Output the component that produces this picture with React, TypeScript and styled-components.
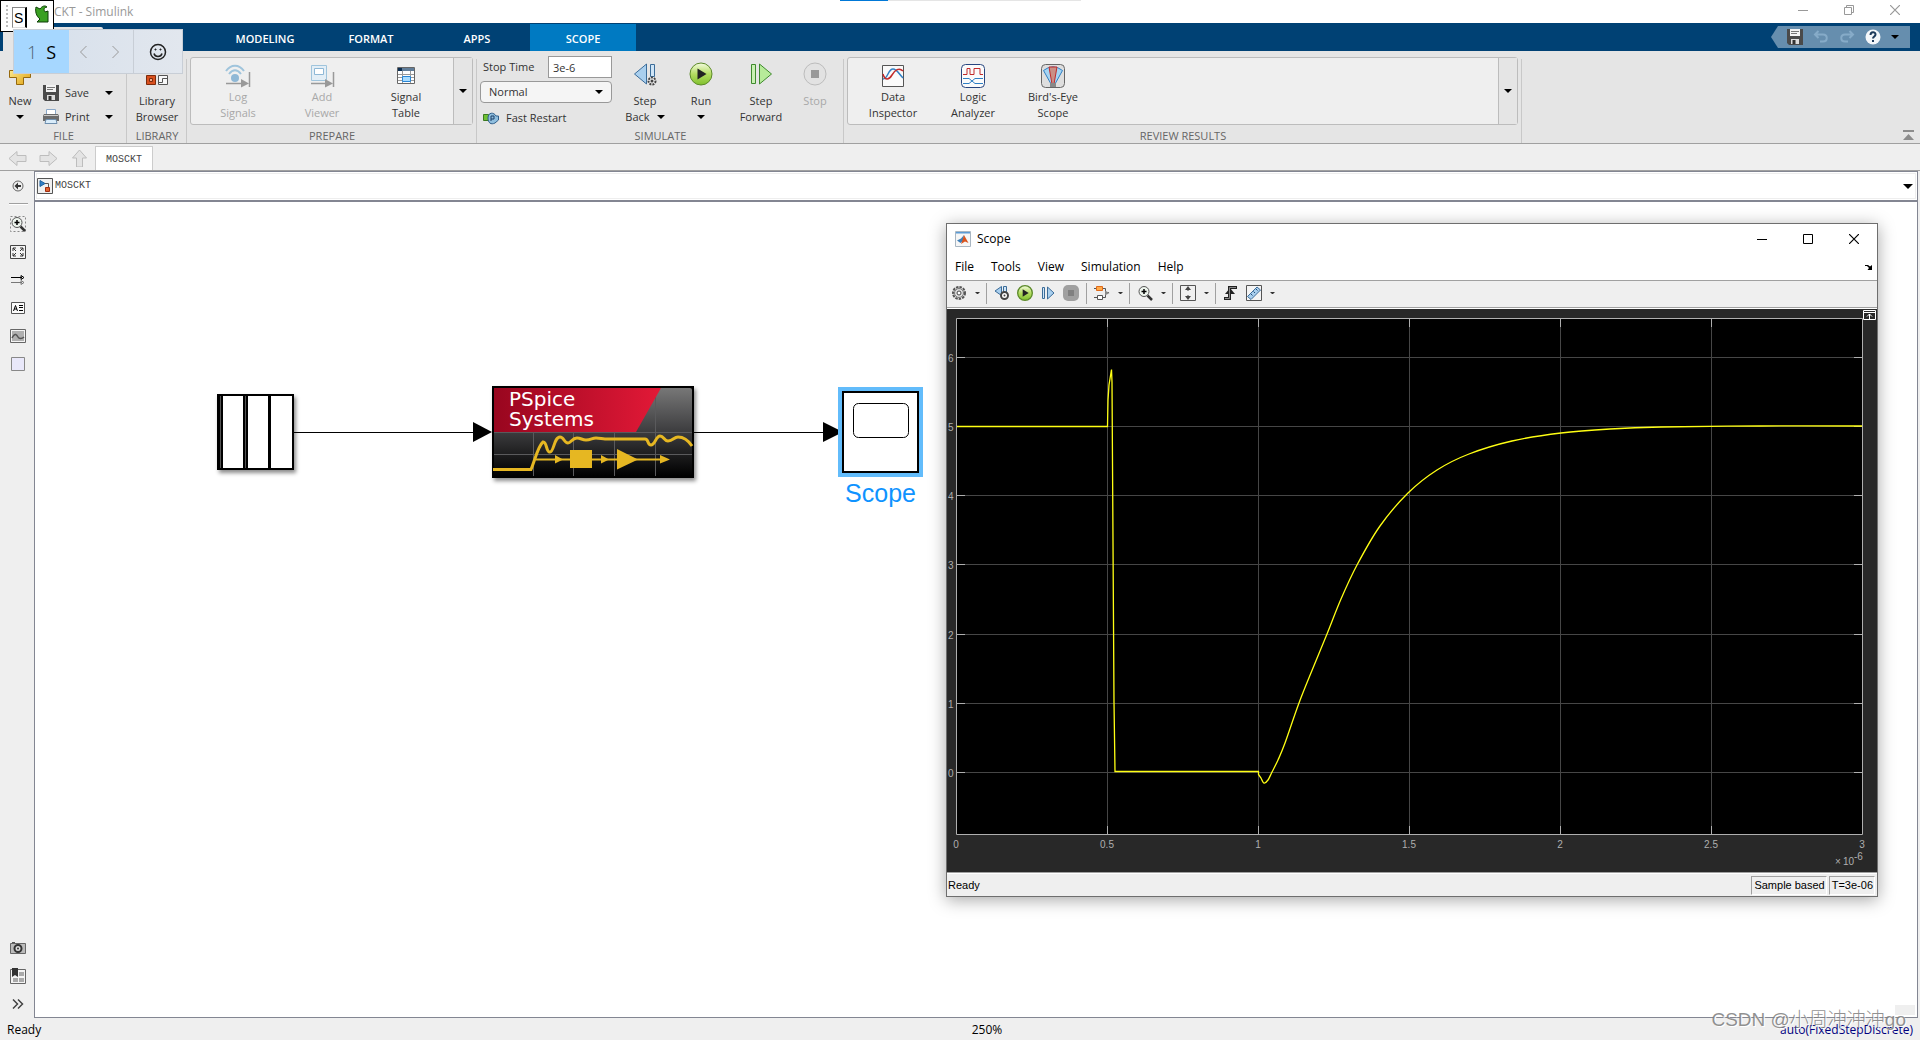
import React from "react";
import styled, { createGlobalStyle, css } from "styled-components";

const Global = createGlobalStyle`
  * { box-sizing: border-box; }
  html, body, #root { height: 100%; }
  body {
    margin: 0;
    overflow: hidden;
    background: #efefef;
    color: #000;
    font: 12px/16px "Open Sans", "Noto Sans", sans-serif;
  }
  button, input, select { font: inherit; color: inherit; }
  svg { display: block; flex: none; }
`;

const buttonReset = css`
  margin: 0;
  padding: 0;
  border: 0;
  background: none;
`;

/* ---------- window frame ---------- */

const Shell = styled.div`
  position: relative;
  display: flex;
  flex-direction: column;
  height: 100vh;
`;

const TitleBar = styled.header`
  display: flex;
  flex: none;
  justify-content: space-between;
  height: 23px;
  background: #fff;
  color: #999;
`;

const WindowTitle = styled.h1`
  margin: 0;
  padding: 4px 0 0 54px;
  font-size: 12px;
  font-weight: 400;
`;

const WindowButtons = styled.div`
  display: flex;
  padding-right: 2px;
`;

const WindowButton = styled.button<{ $h: number }>`
  ${buttonReset}
  display: flex;
  align-items: center;
  justify-content: center;
  width: 46px;
  height: ${(p) => p.$h}px;
`;

const LoadingStrip = styled.div`
  position: absolute;
  top: 0;
  left: 840px;
  width: 241px;
  height: 1px;
  background: linear-gradient(to right, #0078d7 48px, #e5e5e5 48px);
`;

/* ---------- tabs ---------- */

const TabBar = styled.nav`
  display: flex;
  flex: none;
  align-items: flex-end;
  height: 28px;
  background: #004174;
`;

const HomeTab = styled.button`
  ${buttonReset}
  width: 100px;
  height: 24px;
  margin: 0 109px 0 3px;
  background: #e5e5e5;
  border-radius: 0 2px 0 0;
`;

const Tab = styled.button<{ $on?: boolean }>`
  ${buttonReset}
  width: 106px;
  height: 27px;
  padding-top: 2px;
  background: ${(p) => (p.$on ? "#007ac2" : "none")};
  color: #fff;
  font-size: 11px;
  font-weight: 600;
`;

const QuickBar = styled.div`
  display: flex;
  align-items: center;
  gap: 10px;
  align-self: center;
  height: 22px;
  margin: 0 10px 0 auto;
  padding: 0 11px 0 16px;
  background: #668eae;
  clip-path: polygon(0 50%, 7px 0, 100% 0, 100% 100%, 7px 100%);
`;

const PlainButton = styled.button`
  ${buttonReset}
  display: flex;
  align-items: center;
  justify-content: center;
`;

/* ---------- ribbon ---------- */

const Ribbon = styled.div`
  display: flex;
  flex: none;
  position: relative;
  height: 93px;
  background: #e5e5e5;
  border-bottom: 1px solid #a0a0a0;
  color: #333;
  font-size: 11px;
`;

const Section = styled.section<{ $w: number }>`
  display: flex;
  flex-direction: column;
  flex: none;
  width: ${(p) => p.$w}px;
  background: linear-gradient(#c8c8c8, #c8c8c8) right 8px / 1px 100% no-repeat;
`;

const SectionBody = styled.div<{ $pad?: string }>`
  display: flex;
  flex: 1;
  min-height: 0;
  padding: ${(p) => p.$pad ?? "0"};
`;

const SectionLabel = styled.h2`
  margin: 0;
  color: #666;
  font-size: 11px;
  font-weight: 400;
  line-height: 14px;
  text-align: center;
`;

const BigButton = styled.button<{ $w: number; $off?: boolean }>`
  ${buttonReset}
  display: flex;
  flex-direction: column;
  align-items: center;
  width: ${(p) => p.$w}px;
  padding-top: 11px;
  gap: 7px;
  color: ${(p) => (p.$off ? "#a8a8a8" : "#333")};
`;

const GalleryButton = styled(BigButton)`
  padding-top: 6px;
  gap: 1px;
`;

const Caption = styled.span`
  display: flex;
  flex-direction: column;
  align-items: center;
`;

const CaptionRow = styled.span`
  display: flex;
  align-items: center;
  gap: 7px;
  height: 16px;
`;

const SmallRows = styled.div`
  display: flex;
  flex-direction: column;
  justify-content: flex-end;
  padding-left: 3px;
`;

const SmallRow = styled.div`
  display: flex;
  align-items: center;
  height: 24px;
`;

const SmallButton = styled.button<{ $w?: number }>`
  ${buttonReset}
  display: flex;
  align-items: center;
  gap: 6px;
  width: ${(p) => (p.$w ? `${p.$w}px` : "auto")};
`;

const Gallery = styled.div`
  display: flex;
  flex: 1;
  height: 68px;
  border: 1px solid #bcbcbc;
  border-radius: 3px;
  background: #efefef;
  padding-left: 5px;
`;

const GalleryMore = styled.button`
  ${buttonReset}
  display: flex;
  align-items: center;
  justify-content: center;
  width: 19px;
  margin-left: auto;
  border-left: 1px solid #bcbcbc;
  background: #e5e5e5;
`;

const SimForm = styled.form`
  display: flex;
  flex-direction: column;
  flex: none;
  gap: 3px;
  width: 132px;
  margin-right: 3px;
  padding-top: 5px;
`;

const StopTimeRow = styled.div`
  display: flex;
  align-items: center;
  justify-content: space-between;
  padding-left: 3px;
`;

const StopInput = styled.input`
  width: 64px;
  height: 22px;
  padding: 0 4px;
  border: 1px solid #999;
  background: #fff;
`;

const SelectWrap = styled.div`
  display: grid;
  align-items: center;
  & > * { grid-area: 1 / 1; }
  & > svg { justify-self: end; margin-right: 9px; pointer-events: none; }
`;

const ModeSelect = styled.select`
  appearance: none;
  width: 100%;
  height: 22px;
  padding: 0 8px;
  border: 1px solid #999;
  border-radius: 4px;
  background: #f5f5f5;
`;

const FastRestart = styled(SmallButton)`
  height: 24px;
  padding-left: 3px;
  gap: 7px;
`;

const Collapse = styled(PlainButton)`
  align-self: flex-end;
  margin: 0 6px 2px auto;
`;

/* ---------- document area ---------- */

const DocBar = styled.div`
  display: flex;
  flex: none;
  align-items: flex-end;
  height: 27px;
  padding-left: 8px;
  border-bottom: 1px solid #a0a0a0;
`;

const NavArrows = styled.div`
  display: flex;
  gap: 12px;
  height: 24px;
  align-items: center;
  margin-right: 6px;
`;

const DocTab = styled.button`
  ${buttonReset}
  width: 58px;
  height: 24px;
  padding-top: 3px;
  border: 1px solid #ccc;
  border-bottom: 0;
  background: #fff;
  color: #444;
  font-family: "Liberation Mono", monospace;
  font-size: 10px;
`;

const Workspace = styled.div`
  display: flex;
  flex: 1;
  min-height: 0;
`;

const Rail = styled.aside`
  display: flex;
  flex: none;
  flex-direction: column;
  align-items: center;
  width: 34px;
  padding: 1px 0 0 2px;
`;

const RailButton = styled(PlainButton)`
  width: 24px;
  height: 28px;
`;

const RailRule = styled.hr`
  width: 19px;
  height: 2px;
  margin: 3px 0 5px;
  border: 0;
  border-top: 1px solid #a0a0a0;
  background: #fff;
`;

const RailGap = styled.div`
  flex: 1;
`;

const Editor = styled.main`
  display: flex;
  flex: 1;
  flex-direction: column;
  min-width: 0;
  margin-right: 2px;
  border: 1px solid #838692;
`;

const PathBar = styled.div`
  display: flex;
  flex: none;
  align-items: center;
  height: 30px;
  padding: 0 4px 0 2px;
  border-bottom: 2px solid #838692;
  background: #fff;
  box-shadow: inset 0 0 0 1px #fff, inset 0 0 0 2px #eee;
`;

const PathName = styled.button`
  ${buttonReset}
  display: flex;
  align-items: center;
  gap: 2px;
  margin-right: auto;
  color: #444;
  font-family: "Liberation Mono", monospace;
  font-size: 10px;
`;

const Canvas = styled.div`
  position: relative;
  flex: 1;
  overflow: hidden;
  background: #fff;
`;

const Node = styled.div<{ $x: number; $y: number }>`
  position: absolute;
  left: ${(p) => p.$x}px;
  top: ${(p) => p.$y}px;
`;

const ShadowNode = styled(Node)`
  box-shadow: 2px 3px 4px rgba(0, 0, 0, 0.45);
`;

const Wire = styled.svg<{ $x: number }>`
  position: absolute;
  left: ${(p) => p.$x}px;
  top: 218px;
`;

const ScopeName = styled.div`
  color: #0f93ff;
  font: 25px/28px "Liberation Sans", Arial, sans-serif;
  text-align: center;
  padding-top: 2px;
`;

const Grip = styled.div`
  position: absolute;
  right: 2px;
  bottom: 2px;
  width: 20px;
  height: 10px;
  background: #efefef;
`;

const StatusBar = styled.footer`
  display: grid;
  flex: none;
  grid-template-columns: 1fr auto 1fr;
  align-items: center;
  height: 22px;
  padding: 2px 7px 0;
`;

const ZoomLevel = styled.span`
  padding-left: 54px;
`;

const SolverLink = styled.a`
  justify-self: end;
  color: #00007f;
  text-decoration: none;
`;

const Watermark = styled.div`
  position: absolute;
  right: 14px;
  bottom: 8px;
  color: rgba(125, 125, 125, 0.85);
  font: 19px/24px "Liberation Sans", "Noto Sans CJK SC", sans-serif;
  font-weight: 300;
  text-shadow: 1px 1px 0 #fff;
  pointer-events: none;
`;

/* ---------- scope window ---------- */

const ScopeWindow = styled.section`
  position: absolute;
  left: 911px;
  top: 21px;
  width: 932px;
  border: 1px solid #6e6e6e;
  background: #fff;
  box-shadow: 0 3px 16px rgba(0, 0, 0, 0.35);
`;

const ScopeTitle = styled.div`
  display: flex;
  align-items: center;
  height: 30px;
  padding-left: 8px;
`;

const ScopeHeading = styled.h2`
  flex: 1;
  margin: 0;
  padding-left: 6px;
  font-size: 12px;
  font-weight: 400;
`;

const MenuBar = styled.nav`
  display: flex;
  align-items: center;
  gap: 17px;
  height: 27px;
  padding: 0 4px 0 8px;
  border-bottom: 1px solid #a0a0a0;
`;

const MenuItem = styled.button`
  ${buttonReset}
`;

const MenuFill = styled.div`
  flex: 1;
`;

const ToolBar = styled.div`
  display: flex;
  align-items: center;
  height: 27px;
  padding: 0 0 2px 4px;
  border-bottom: 1px solid #a0a0a0;
  background: #efefef;
`;

const ToolGroup = styled.div`
  display: flex;
  align-items: center;
  gap: 7px;
`;

const ToolMore = styled(PlainButton)`
  width: 16px;
  height: 20px;
  margin-left: -5px;
`;

const ToolRule = styled.div<{ $after?: boolean }>`
  width: 1px;
  height: 21px;
  margin: 0 7px 0 ${(p) => (p.$after ? "7px" : "1px")};
  background: #a0a0a0;
`;

const PlotArea = styled.div`
  border-top: 1px solid #fff;
  border-bottom: 1px solid #a0a0a0;
  background: #282828;
  text {
    fill: #afafaf;
    font: 10px "Liberation Sans", Arial, sans-serif;
  }
`;

const ScopeStatus = styled.div`
  display: flex;
  align-items: center;
  gap: 2px;
  height: 23px;
  padding: 0 2px 0 1px;
  border-top: 1px solid #fff;
  background: #efefef;
  font: 11px/16px "Liberation Sans", Arial, sans-serif;
`;

const StatusText = styled.span`
  flex: 1;
`;

const StatusCell = styled.span`
  height: 19px;
  padding: 0 1px 0 2px;
  border: 1px solid #fff;
  border-top-color: #a0a0a0;
  border-left-color: #a0a0a0;
`;

/* ---------- input-method overlay ---------- */

const SearchPopup = styled.div`
  position: absolute;
  left: 0;
  top: 0;
  display: flex;
  align-items: flex-start;
  gap: 8px;
  width: 54px;
  height: 32px;
  padding: 4px 3px 0 5px;
  border: 1px solid #000;
  background: #fff;
`;

const DotGrip = styled.span`
  width: 2px;
  height: 22px;
  margin-right: -4px;
  background: repeating-linear-gradient(#bbb 0 2px, #fff 2px 4px);
`;

const SearchInput = styled.input`
  width: 15px;
  height: 21px;
  margin-top: 2px;
  padding: 0 0 0 1px;
  border: 1px solid #888;
  border-right: 2px solid #000;
  border-bottom-color: #ddd;
  background: #fff;
  outline: 0;
  font: 14px "Liberation Sans", Arial, sans-serif;
`;

const ImeBar = styled.div`
  position: absolute;
  left: 13px;
  top: 29px;
  display: flex;
  width: 170px;
  height: 45px;
  border: 1px solid #c8ced6;
  background: linear-gradient(to right, #d5dfeb, #e2e7ee);
`;

const Candidate = styled.button`
  ${buttonReset}
  width: 55px;
  background: #a6d7ff;
  color: #000;
  font-size: 18px;
  display: flex;
  align-items: center;
  justify-content: center;
  gap: 9px;
`;

const CandidateIndex = styled.span`
  color: #4c6173;
  font-weight: 300;
`;

const ImeCell = styled(PlainButton)<{ $w: number; $line?: boolean }>`
  width: ${(p) => p.$w}px;
  border-left: ${(p) => (p.$line ? "1px solid #c8ced6" : "0")};
`;

/* ---------- drawings ---------- */

const Caret = ({ w = 8, c = "#000" }: { w?: number; c?: string }) => (
  <svg width={w} height={w / 2} viewBox="0 0 8 4">
    <path d="M0 0h8L4 4z" fill={c} />
  </svg>
);

const FloppyIcon = () => (
  <svg width="16" height="16" viewBox="0 0 16 16">
    <path d="M0 0h16v16H2l-2-2z" fill="#4a4a4a" />
    <path d="M3 0h10v7H3z" fill="#f2f2f2" />
    <path d="M4 2.500h8M4 4.500h6" stroke="#777" />
    <path d="M4 10h8v5H4z" fill="#ddd" />
    <path d="M5.500 11h3v4h-3z" fill="#333" />
  </svg>
);

const PrinterIcon = () => (
  <svg width="16" height="16" viewBox="0 0 16 16">
    <path d="M3.500.500h9v6h-9z" fill="#fff" stroke="#8aa8c8" />
    <path d="M1 5h14l1 2v5H0V7z" fill="#6b6b6b" />
    <path d="M1 6.500h14" stroke="#c8c8c8" />
    <path d="M3 10.500h10l1 4H2z" fill="#d9ecfa" stroke="#6f8fae" />
  </svg>
);

const PlusIcon = () => (
  <svg width="24" height="24" viewBox="0 0 24 24">
    <defs>
      <linearGradient id="gold" x1="0" y1="0" x2="1" y2="1">
        <stop offset="0" stopColor="#fff8a8" />
        <stop offset="1" stopColor="#e0a010" />
      </linearGradient>
    </defs>
    <path d="M8.500 1.500h7v7h7v7h-7v7h-7v-7h-7v-7h7z" fill="url(#gold)" stroke="#96690d" />
  </svg>
);

const LibraryIcon = () => (
  <svg width="24" height="24" viewBox="0 0 24 24">
    <path d="M1.500 1.500h9v9h-9zM13.500 1.500h9v9h-9z" fill="#eef5fb" stroke="#55708c" />
    <path d="M1.500 13.500h9v9h-9z" fill="#d9501e" stroke="#7c2b0c" />
    <path d="M4.500 16.500h3v3h-3z" fill="#f5a98a" stroke="#7c2b0c" />
    <path d="M13.500 13.500h9v9h-9z" fill="#f8f8f8" stroke="#555" />
    <path d="M14 20.500h3.500v-4H22" fill="none" stroke="#555" />
  </svg>
);

const LogIcon = () => (
  <svg width="26" height="24" viewBox="0 0 26 24" fill="none">
    <path d="M1 7c5-7 13-7 18 0M4 10c4-5 8-5 12 0" stroke="#9fc4dc" strokeWidth="2" />
    <circle cx="10" cy="14" r="4" fill="#8fb8d6" />
    <path d="M1 19.500h16M24.500 8v15" stroke="#999" strokeWidth="1.500" />
    <path d="M16 15l8 4.500-8 4z" fill="#999" />
  </svg>
);

const ViewerIcon = () => (
  <svg width="26" height="24" viewBox="0 0 26 24" fill="none">
    <path d="M2.500 1.500h15v15h-15z" fill="#e3eef6" stroke="#9fc4dc" />
    <path d="M5.500 4.500h9v6h-9z" fill="#fff" stroke="#8fb8d6" />
    <path d="M2 19.500h15M24.500 8v15" stroke="#999" strokeWidth="1.500" />
    <path d="M16 15l8 4.500-8 4z" fill="#999" />
  </svg>
);

const TableIcon = () => (
  <svg width="24" height="24" viewBox="0 0 24 24">
    <path d="M3.500 3.500h17v16h-17z" fill="#fff" stroke="#666" />
    <path d="M4 4h16v3H4z" fill="#607d99" />
    <path d="M4 4h4v3H4z" fill="#0d2f52" />
    <path d="M4 10.500h16M4 13.500h16M4 16.500h16M8.500 7v12M16.500 7v12" stroke="#999" />
    <path d="M8.500 12.500h8v5h-8z" fill="#a9dcff" stroke="#2a86d4" />
  </svg>
);

const StepBackIcon = () => (
  <svg width="24" height="24" viewBox="0 0 24 24">
    <path d="M13.500 2v20L1.500 12z" fill="#a9cfee" stroke="#3b6c99" />
    <path d="M17.500 2.500h4v12h-4z" fill="#cfe5f7" stroke="#3b6c99" />
    <circle cx="19" cy="19" r="3.500" fill="#eee" stroke="#444" strokeWidth="2" strokeDasharray="2 1" />
    <circle cx="19" cy="19" r="1.500" fill="#444" />
  </svg>
);

const RunIcon = ({ s }: { s: number }) => (
  <svg width={s} height={s} viewBox="0 0 24 24">
    <defs>
      <linearGradient id="lime" x1="0" y1="0" x2="0" y2="1">
        <stop offset="0" stopColor="#f4fbe0" />
        <stop offset="0.500" stopColor="#b4dd62" />
        <stop offset="1" stopColor="#7fc02c" />
      </linearGradient>
    </defs>
    <circle cx="12" cy="12" r="11" fill="url(#lime)" stroke="#5c8a2a" strokeWidth={s < 20 ? 2 : 1} />
    <path d="M8.500 6.500v11l9-5.500z" fill="#222" />
  </svg>
);

const StepForwardIcon = () => (
  <svg width="24" height="24" viewBox="0 0 24 24">
    <path d="M2.500 2.500h4v19h-4z" fill="#c9f0b4" stroke="#3f8a2e" />
    <path d="M10.500 2v20l12-10z" fill="#b7eb9a" stroke="#3f8a2e" />
  </svg>
);

const StopIcon = () => (
  <svg width="24" height="24" viewBox="0 0 24 24">
    <circle cx="12" cy="12" r="11" fill="#e2e2e2" stroke="#bcbcbc" />
    <path d="M8 8h8v8H8z" fill="#999" />
  </svg>
);

const FastIcon = () => (
  <svg width="16" height="14" viewBox="0 0 16 14">
    <path d="M.500 3.500h5v6h-5z" fill="#6fc034" stroke="#3b7a1e" />
    <path d="M5 7c0-6 6-6 8-2h2.500v4L12 12c-4 2-7 0-7-5z" fill="#8fbede" stroke="#2f5f8c" />
    <path d="M8 10V5h3v3H8" fill="none" stroke="#1d3f66" />
  </svg>
);

const InspectorIcon = () => (
  <svg width="24" height="24" viewBox="0 0 24 24" fill="none">
    <path d="M1.500 1.500h21v21h-21z" fill="#fafafa" stroke="#555" />
    <path d="M2 15c5 0 5-10 10-10 4 0 5 4 10 9" stroke="#2f7fc4" strokeWidth="1.500" />
    <path d="M2 10c2 7 6 6 9 1s7-8 11-4" stroke="#c22b2b" strokeWidth="1.500" />
  </svg>
);

const LogicIcon = () => (
  <svg width="24" height="24" viewBox="0 0 24 24" fill="none">
    <rect x=".500" y=".500" width="23" height="23" rx="4" fill="#fbfbfb" stroke="#27457f" />
    <path d="M2 10.500h4v-6h3v6h4v-6h6v6h3" stroke="#c22b2b" />
    <path d="M2 14.500h6l6 5h8M2 19.500h6l6-5h8" stroke="#2f7fc4" />
  </svg>
);

const BirdIcon = () => (
  <svg width="24" height="24" viewBox="0 0 24 24">
    <rect x=".500" y=".500" width="23" height="23" rx="4" fill="#dedede" stroke="#666" />
    <path d="M10 20L2.500 6.500Q12-1 21.500 6.500L14 20z" fill="#a5d4f2" stroke="#2f7fc4" />
    <path d="M11 20L8 3h8l-3 17z" fill="#c98f86" stroke="#c22b2b" />
    <path d="M9 19h6v4H9z" fill="#888" />
  </svg>
);

const NavArrow = ({ r }: { r: number }) => (
  <svg width="19" height="17" viewBox="0 0 19 17">
    <path
      d="M1 8.500L9 1.500v4h9v6H9v4z"
      fill="#e4e4e4"
      stroke="#bdbdbd"
      transform={`rotate(${r} 9.500 8.500)`}
    />
  </svg>
);

const ModelIcon = () => (
  <svg width="16" height="16" viewBox="0 0 16 16">
    <path d="M.500.500h15v15H.500z" fill="#f0f0f0" stroke="#555" />
    <path d="M3 2.500v6l5-3z" fill="#2f7fc4" stroke="#1d5f9c" />
    <path d="M8 5.500h3.500V9" fill="none" stroke="#555" />
    <path d="M8.500 9.500h4v4h-4z" fill="#e0622e" stroke="#a02d10" />
  </svg>
);

const GearIcon = () => (
  <svg width="16" height="16" viewBox="0 0 16 16" fill="none">
    <circle cx="8" cy="8" r="6" stroke="#555" strokeWidth="2" strokeDasharray="2.500 1" />
    <circle cx="8" cy="8" r="4.500" fill="#ddd" stroke="#777" />
    <circle cx="8" cy="8" r="2" fill="#fff" stroke="#444" />
  </svg>
);

const MagnifierIcon = ({ dashed }: { dashed?: boolean }) => (
  <svg width="16" height="16" viewBox="0 0 16 16" fill="none">
    {dashed && <path d="M.500.500h15v15H.500z" stroke="#888" strokeDasharray="2 2" />}
    <circle cx="7" cy="6.500" r="5" fill="#eef5ee" stroke="#555" />
    <path d="M4.500 6.500h5M7 4v5" stroke="#000" strokeWidth="1.500" />
    <path d="M10.500 10.500L15 15" stroke="#333" strokeWidth="2.500" />
  </svg>
);

const ScopeStepBack = () => (
  <svg width="16" height="16" viewBox="0 0 16 16">
    <path d="M7.500 1.500v9L1 6z" fill="#a9cfee" stroke="#3b6c99" />
    <path d="M9.500 1.500h3v6h-3z" fill="#cfe5f7" stroke="#3b6c99" />
    <circle cx="10.500" cy="10.500" r="3.500" fill="#fff" stroke="#444" strokeWidth="2" />
    <circle cx="10.500" cy="10.500" r="1" fill="#444" />
  </svg>
);

const ScopeStep = () => (
  <svg width="16" height="16" viewBox="0 0 16 16">
    <path d="M2.500 2.500h2v11h-2z" fill="#cfe5f7" stroke="#3b6c99" />
    <path d="M7.500 2v12l6.500-6z" fill="#a9cfee" stroke="#3b6c99" />
  </svg>
);

const ScopeStop = () => (
  <svg width="16" height="16" viewBox="0 0 16 16">
    <rect width="16" height="16" rx="5" fill="#a0a0a0" />
    <path d="M5 5h6v6H5z" fill="#808080" />
  </svg>
);

const SignalIcon = () => (
  <svg width="16" height="16" viewBox="0 0 16 16" fill="none">
    <path d="M0 3.500h11.500v4H15M0 12.500h11.500v-4" stroke="#555" />
    <path d="M2.500 1.500h6v4h-6z" fill="#ffab4a" stroke="#e06a1a" />
    <path d="M3.500 10.500h5v4h-5z" fill="#fff" stroke="#555" />
    <path d="M11 5.500l4.500 2.500-4.500 2.500z" fill="#888" />
  </svg>
);

const ScaleIcon = () => (
  <svg width="16" height="16" viewBox="0 0 16 16">
    <path d="M.500.500h15v15H.500z" fill="#f0f0f0" stroke="#555" />
    <path d="M8 1l3 4H5zM8 15l3-4H5z" fill="#444" />
    <path d="M8 3v3M8 10v3" stroke="#444" />
  </svg>
);

const TriggerIcon = () => (
  <svg width="16" height="16" viewBox="0 0 16 16" fill="none">
    <path d="M1 13.500h5.500v-11H14" stroke="#222" strokeWidth="3" />
    <path d="M7 3l5 6H2z" fill="#222" />
    <path d="M2 13.500h4.500v-11H13" stroke="#888" />
  </svg>
);

const RulerIcon = () => (
  <svg width="16" height="16" viewBox="0 0 16 16">
    <path d="M.500.500h15v15H.500z" fill="#f4f4f4" stroke="#555" />
    <path d="M1.500 11.500L11 2l3.500 3L5 14.500z" fill="#a9cfee" stroke="#3b6c99" />
    <path d="M5 9l1.500 1.500M7.500 6.500L9 8M10 4l1.500 1.500" stroke="#24507a" />
  </svg>
);

const MatlabIcon = () => (
  <svg width="16" height="16" viewBox="0 0 16 16">
    <path d="M.500.500h15v15H.500z" fill="#f6f6f6" stroke="#a9b6c2" />
    <path d="M1 1h14v1.500H1z" fill="#5b9bd5" />
    <path d="M2 9.500l4-2L9 4 8 10l-2.500 2z" fill="#3f7fb8" />
    <path d="M9 4l4.500 8L10 10.500 6 13l1.500-4z" fill="#d9541e" />
  </svg>
);

const Minimize = ({ c }: { c: string }) => (
  <svg width="10" height="10"><path d="M0 5.500h10" stroke={c} /></svg>
);

const Maximize = () => (
  <svg width="10" height="10"><path d="M.500.500h9v9h-9z" fill="none" stroke="#000" /></svg>
);

const Restore = () => (
  <svg width="10" height="10"><path d="M.500 2.500h7v7h-7zM2.500 2.500v-2h7v7h-2" fill="none" stroke="#999" /></svg>
);

const CloseX = ({ c }: { c: string }) => (
  <svg width="10" height="10"><path d="M0 0l10 10M10 0L0 10" stroke={c} strokeWidth="1.200" /></svg>
);

/* ---------- pieces ---------- */

const Lines = ({ a, b, more }: { a: string; b?: string; more?: boolean }) => (
  <Caption>
    <span>{a}</span>
    {(b || more) && (
      <CaptionRow>
        {b && <span>{b}</span>}
        {more && <Caret />}
      </CaptionRow>
    )}
  </Caption>
);

const railTop: [string, React.ReactNode][] = [
  ["Zoom", <MagnifierIcon dashed />],
  ["Fit to view", (
    <svg width="16" height="14" viewBox="0 0 16 14" fill="none">
      <path d="M.500.500h15v13H.500z" fill="#f4f4f4" stroke="#444" />
      <path d="M3 6V3h3M3 3l3 3M13 6V3h-3M13 3l-3 3M3 8v3h3M3 11l3-3M13 8v3h-3M13 11l-3-3" stroke="#333" />
    </svg>
  )],
  ["Sample time", (
    <svg width="16" height="10" viewBox="0 0 16 10" fill="none">
      <path d="M1 2.500h11M11 .500l3 2-3 2z" stroke="#000" />
      <path d="M1 7.500h11M11 5.500l3 2-3 2z" stroke="#777" />
    </svg>
  )],
  ["Annotation", (
    <svg width="14" height="12" viewBox="0 0 14 12" fill="none">
      <path d="M.500.500h13v11H.500z" fill="#fafafa" stroke="#555" />
      <path d="M2.500 9L4.500 3.500 6.500 9M3 7h3M8 3.500h4M8 5.500h4M8 8.500h4" stroke="#000" />
    </svg>
  )],
  ["Image", (
    <svg width="16" height="14" viewBox="0 0 16 14" fill="none">
      <path d="M.500.500h15v13H.500z" fill="#f4f4f4" stroke="#666" />
      <path d="M2 2h12v10H2z" fill="#b0b0b0" />
      <path d="M2 9c3-6 5-3 6-1s4 2 6 0" stroke="#555" strokeWidth="1.500" />
    </svg>
  )],
  ["Area", (
    <svg width="14" height="14"><path d="M.500.500h13v13H.500z" fill="#e9e8fa" stroke="#888" /></svg>
  )],
];

const railBottom: [string, React.ReactNode][] = [
  ["Screenshot", (
    <svg width="16" height="12" viewBox="0 0 16 12">
      <path d="M.500 1.500h15v10H.500z" fill="#bbb" stroke="#666" />
      <path d="M2 0h3v1H2z" fill="#555" />
      <circle cx="8" cy="6.500" r="3.500" fill="#ddd" stroke="#333" strokeWidth="2" />
      <circle cx="8" cy="6.500" r="1" fill="#333" />
    </svg>
  )],
  ["Model browser", (
    <svg width="16" height="16" viewBox="0 0 16 16">
      <path d="M.500 1.500h15v14H.500z" fill="#f4f4f4" stroke="#666" />
      <path d="M9 4h5v4H9zM3 10h5v4H3zM9 10h5v4H9z" fill="#aaa" />
      <path d="M2 0h6v9L5 7 2 9z" fill="#333" />
    </svg>
  )],
  ["More", (
    <svg width="12" height="10" viewBox="0 0 12 10" fill="none">
      <path d="M1 .500L5.500 5 1 9.500M6 .500L10.500 5 6 9.500" stroke="#444" strokeWidth="1.500" />
    </svg>
  )],
];

const X0 = 956;
const Y0 = 772;
const xs = [0, 1, 2, 3, 4, 5, 6].map((i) => Math.round(X0 + i * 151) + 0.5);
const ys = [0, 1, 2, 3, 4, 5, 6].map((i) => Math.round(Y0 - i * 69.2) + 0.5);
const xLabels = ["0", "0.5", "1", "1.5", "2", "2.5", "3"];

/* recovery of the output after the second edge */
const rise: [number, number][] = [
  [1261, 778], [1264, 783], [1268, 780], [1272, 772], [1278, 760], [1285, 743],
  [1299, 703], [1313, 668], [1327, 634], [1341, 599], [1357, 565], [1380, 526],
  [1408, 493], [1437, 470], [1469, 454], [1512, 441], [1561, 433], [1610, 429],
  [1661, 427], [1760, 426], [1862, 426],
];

/* Catmull-Rom spline through the points, as cubic segments */
const smooth = (p: [number, number][]) =>
  p
    .slice(1)
    .map((end, i) => {
      const a = p[Math.max(i - 1, 0)];
      const b = p[i];
      const d = p[Math.min(i + 2, p.length - 1)];
      const c1 = [b[0] + (end[0] - a[0]) / 6, b[1] + (end[1] - a[1]) / 6];
      const c2 = [end[0] - (d[0] - b[0]) / 6, end[1] - (d[1] - b[1]) / 6];
      return `C${c1.join(" ")} ${c2.join(" ")} ${end.join(" ")}`;
    })
    .join("");

const Plot = () => (
  <svg width="100%" viewBox="947 309 930 563" role="img" aria-label="Scope signal">
    <path d="M956.500 318.500h906v516h-906z" fill="#000" />
    <g stroke="#464646">
      {xs.slice(1, 6).map((x) => <path key={x} d={`M${x} 319v515`} />)}
      {ys.map((y) => <path key={y} d={`M957 ${y}h905`} />)}
    </g>
    <g stroke="#afafaf" fill="none">
      <path d="M956.500 318.500h906v516h-906z" />
      {xs.slice(1, 6).map((x) => <path key={x} d={`M${x} 319v8M${x} 826v8`} />)}
      {ys.map((y) => <path key={y} d={`M957 ${y}h8M1854 ${y}h8`} />)}
    </g>
    {xLabels.map((t, i) => <text key={t} x={xs[i] - 0.5} y="848" textAnchor="middle">{t}</text>)}
    {ys.map((y, i) => <text key={y} x="948" y={y + 4}>{i}</text>)}
    <text x="1835" y="865">×</text>
    <text x="1843" y="865">10</text>
    <text x="1854" y="860">-6</text>
    <path
      d={`M957 426.500H1107.500L1108 400 1109 385 1111.500 369.500 1112 382 1114 702 1115 771.500H1258.500V774.500L${rise[0].join(" ")}${smooth(rise)}`}
      fill="none"
      stroke="#ffff13"
      strokeWidth="1.300"
    />
    <path d="M1863.500 310.500h12v9h-12z" fill="#282828" stroke="#fff" />
    <path d="M1864 312.500h11M1869.500 319v-5M1867 316.500l2.500-2.500 2.500 2.500" stroke="#fff" fill="none" />
  </svg>
);

const SpiceBlock = () => (
  <svg width="202" height="92" viewBox="0 0 202 92">
    <defs>
      <linearGradient id="slate" x1="0" y1="0" x2="0" y2="1">
        <stop offset="0" stopColor="#777" />
        <stop offset="0.500" stopColor="#3c3c3e" />
        <stop offset="1" stopColor="#000" />
      </linearGradient>
      <linearGradient id="crimson">
        <stop offset="0" stopColor="#98061f" />
        <stop offset="1" stopColor="#e31937" />
      </linearGradient>
    </defs>
    <path d="M0 0h202v92H0z" fill="#000" />
    <rect x="2" y="2" width="198" height="88" rx="2" fill="url(#slate)" />
    <path d="M2 46.500h198M2 68.500h198M150 23.500h50M41.500 46v44M81.500 46v44M122.500 46v44M163.500 2v88" stroke="#5a5a5c" />
    <path d="M2 2h167l-25 44H2z" fill="url(#crimson)" />
    <text x="17" y="20" fill="#fff" fontSize="20" fontFamily="DejaVu Sans">PSpice</text>
    <text x="17" y="40" fill="#fff" fontSize="20" fontFamily="DejaVu Sans">Systems</text>
    <g fill="none" stroke="#e6b722">
      <path
        d="M1 83.500h38C43 74 46 60 51 56c4-1 3 11 7 10 4 0 4-15 10-15 4 0 4 6 8 6 3 0 4-5 9-5 4 0 5 2 9 2 5 0 6-2 10-2s6 1 9 1h40c4 0 2 6 6 6 4 0 5-9 9-9s4 5 8 5c5 0 6-4 10-4 6 0 10 3 14 9"
        strokeWidth="3"
      />
      <path d="M44 73.500h128" strokeWidth="2" />
    </g>
    <path d="M78 64h22v18H78zM125 63l21 10.500-21 10zM63 69l8 4.500-8 4zM109 69l8 4.500-8 4zM168 69l10 4.500-10 4z" fill="#e6b722" />
  </svg>
);

const ScopePanel = () => (
  <ScopeWindow aria-label="Scope window">
    <ScopeTitle>
      <MatlabIcon />
      <ScopeHeading>Scope</ScopeHeading>
      <WindowButton $h={29} aria-label="Minimize"><Minimize c="#000" /></WindowButton>
      <WindowButton $h={29} aria-label="Maximize"><Maximize /></WindowButton>
      <WindowButton $h={29} aria-label="Close"><CloseX c="#000" /></WindowButton>
    </ScopeTitle>
    <MenuBar>
      {["File", "Tools", "View", "Simulation", "Help"].map((m) => <MenuItem key={m}>{m}</MenuItem>)}
      <MenuFill />
      <PlainButton aria-label="Dock">
        <svg width="8" height="6" viewBox="0 0 8 6"><path d="M0 1h3l2 1.500L7 1v5H2.500L4 4 2 2H0z" fill="#000" /></svg>
      </PlainButton>
    </MenuBar>
    <ToolBar>
      <ToolGroup>
        <PlainButton aria-label="Settings"><GearIcon /></PlainButton>
        <ToolMore aria-label="Settings menu"><Caret w={5} c="#333" /></ToolMore>
      </ToolGroup>
      <ToolRule />
      <ToolGroup>
        <PlainButton aria-label="Step back"><ScopeStepBack /></PlainButton>
        <PlainButton aria-label="Run"><RunIcon s={16} /></PlainButton>
        <PlainButton aria-label="Step forward"><ScopeStep /></PlainButton>
        <PlainButton aria-label="Stop"><ScopeStop /></PlainButton>
      </ToolGroup>
      <ToolRule $after />
      <ToolGroup>
        <PlainButton aria-label="Signal selector"><SignalIcon /></PlainButton>
        <ToolMore aria-label="Signal menu"><Caret w={5} c="#333" /></ToolMore>
      </ToolGroup>
      <ToolRule />
      <ToolGroup>
        <PlainButton aria-label="Zoom in"><MagnifierIcon /></PlainButton>
        <ToolMore aria-label="Zoom menu"><Caret w={5} c="#333" /></ToolMore>
      </ToolGroup>
      <ToolRule />
      <ToolGroup>
        <PlainButton aria-label="Scale axes"><ScaleIcon /></PlainButton>
        <ToolMore aria-label="Scale menu"><Caret w={5} c="#333" /></ToolMore>
      </ToolGroup>
      <ToolRule />
      <ToolGroup>
        <PlainButton aria-label="Triggers"><TriggerIcon /></PlainButton>
        <PlainButton aria-label="Measurements"><RulerIcon /></PlainButton>
        <ToolMore aria-label="Measurements menu"><Caret w={5} c="#333" /></ToolMore>
      </ToolGroup>
    </ToolBar>
    <PlotArea><Plot /></PlotArea>
    <ScopeStatus>
      <StatusText>Ready</StatusText>
      <StatusCell>Sample based</StatusCell>
      <StatusCell>T=3e-06</StatusCell>
    </ScopeStatus>
  </ScopeWindow>
);

export default function App() {
  return (
    <Shell>
      <Global />
      <TitleBar>
        <WindowTitle>CKT - Simulink</WindowTitle>
        <WindowButtons>
          <WindowButton $h={20} aria-label="Minimize"><Minimize c="#999" /></WindowButton>
          <WindowButton $h={20} aria-label="Restore"><Restore /></WindowButton>
          <WindowButton $h={20} aria-label="Close"><CloseX c="#999" /></WindowButton>
        </WindowButtons>
      </TitleBar>
      <LoadingStrip />

      <TabBar>
        <HomeTab aria-label="Home" />
        <Tab>MODELING</Tab>
        <Tab>FORMAT</Tab>
        <Tab>APPS</Tab>
        <Tab $on>SCOPE</Tab>
        <QuickBar>
          <PlainButton aria-label="Save"><FloppyIcon /></PlainButton>
          <PlainButton aria-label="Undo">
            <svg width="16" height="14" viewBox="0 0 16 14" fill="none">
              <path d="M2 4.500h8c5 0 5 7 0 7H7M5.500 1L2 4.500 5.500 8" stroke="#86abc8" strokeWidth="2" />
            </svg>
          </PlainButton>
          <PlainButton aria-label="Redo">
            <svg width="16" height="14" viewBox="0 0 16 14" fill="none">
              <path d="M14 4.500H6c-5 0-5 7 0 7h3M10.500 1L14 4.500 10.500 8" stroke="#86abc8" strokeWidth="2" />
            </svg>
          </PlainButton>
          <PlainButton aria-label="Help">
            <svg width="16" height="16" viewBox="0 0 16 16" fill="none">
              <circle cx="8" cy="8" r="7.500" fill="#f4f7fa" />
              <path d="M5.500 6c0-3.500 5-3.500 5-.500 0 2-2.500 2-2.500 4M8 11v2" stroke="#1c3a5a" strokeWidth="2" />
            </svg>
          </PlainButton>
          <PlainButton aria-label="Help menu"><Caret /></PlainButton>
        </QuickBar>
      </TabBar>

      <Ribbon>
        <Section $w={127}>
          <SectionBody>
            <BigButton $w={40}>
              <PlusIcon />
              <Lines a="New" more />
            </BigButton>
            <SmallRows>
              {[["Save", <FloppyIcon />], ["Print", <PrinterIcon />]].map(([t, icon]) => (
                <SmallRow key={t as string}>
                  <SmallButton $w={62}>{icon}<span>{t}</span></SmallButton>
                  <PlainButton aria-label={`${t} menu`}><Caret /></PlainButton>
                </SmallRow>
              ))}
            </SmallRows>
          </SectionBody>
          <SectionLabel>FILE</SectionLabel>
        </Section>

        <Section $w={60}>
          <SectionBody>
            <BigButton $w={60}>
              <LibraryIcon />
              <Lines a="Library" b="Browser" />
            </BigButton>
          </SectionBody>
          <SectionLabel>LIBRARY</SectionLabel>
        </Section>

        <Section $w={290}>
          <SectionBody $pad="6px 4px 0 3px">
            <Gallery>
              <GalleryButton $w={84} $off disabled><LogIcon /><Lines a="Log" b="Signals" /></GalleryButton>
              <GalleryButton $w={84} $off disabled><ViewerIcon /><Lines a="Add" b="Viewer" /></GalleryButton>
              <GalleryButton $w={84}><TableIcon /><Lines a="Signal" b="Table" /></GalleryButton>
              <GalleryMore aria-label="More prepare tools"><Caret /></GalleryMore>
            </Gallery>
          </SectionBody>
          <SectionLabel>PREPARE</SectionLabel>
        </Section>

        <Section $w={367}>
          <SectionBody $pad="0 0 0 3px">
            <SimForm>
              <StopTimeRow>
                <label htmlFor="stop">Stop Time</label>
                <StopInput id="stop" defaultValue="3e-6" />
              </StopTimeRow>
              <SelectWrap>
                <ModeSelect aria-label="Simulation mode"><option>Normal</option></ModeSelect>
                <Caret />
              </SelectWrap>
              <FastRestart type="button"><FastIcon /><span>Fast Restart</span></FastRestart>
            </SimForm>
            <BigButton $w={60}><StepBackIcon /><Lines a="Step" b="Back" more /></BigButton>
            <BigButton $w={52}><RunIcon s={24} /><Lines a="Run" more /></BigButton>
            <BigButton $w={68}><StepForwardIcon /><Lines a="Step" b="Forward" /></BigButton>
            <BigButton $w={40} $off disabled><StopIcon /><Lines a="Stop" /></BigButton>
          </SectionBody>
          <SectionLabel>SIMULATE</SectionLabel>
        </Section>

        <Section $w={678}>
          <SectionBody $pad="6px 4px 0 3px">
            <Gallery>
              <GalleryButton $w={80}><InspectorIcon /><Lines a="Data" b="Inspector" /></GalleryButton>
              <GalleryButton $w={80}><LogicIcon /><Lines a="Logic" b="Analyzer" /></GalleryButton>
              <GalleryButton $w={80}><BirdIcon /><Lines a="Bird's-Eye" b="Scope" /></GalleryButton>
              <GalleryMore aria-label="More result tools"><Caret /></GalleryMore>
            </Gallery>
          </SectionBody>
          <SectionLabel>REVIEW RESULTS</SectionLabel>
        </Section>
        <Collapse aria-label="Collapse ribbon">
          <svg width="11" height="11" viewBox="0 0 11 11"><path d="M0 0h11v2H0zM5.500 4L11 10H0z" fill="#8c8c8c" /></svg>
        </Collapse>
      </Ribbon>

      <DocBar>
        <NavArrows>
          <PlainButton aria-label="Back"><NavArrow r={0} /></PlainButton>
          <PlainButton aria-label="Forward"><NavArrow r={180} /></PlainButton>
          <PlainButton aria-label="Up"><NavArrow r={90} /></PlainButton>
        </NavArrows>
        <DocTab>MOSCKT</DocTab>
      </DocBar>

      <Workspace>
        <Rail>
          <RailButton aria-label="Hide browser">
            <svg width="12" height="12" viewBox="0 0 12 12" fill="none">
              <circle cx="6" cy="6" r="5" stroke="#666" />
              <path d="M9 6H5" stroke="#333" strokeWidth="2" />
              <path d="M6 2.500v7L2.500 6z" fill="#333" />
            </svg>
          </RailButton>
          <RailRule />
          {railTop.map(([t, icon]) => <RailButton key={t} aria-label={t}>{icon}</RailButton>)}
          <RailGap />
          {railBottom.map(([t, icon]) => <RailButton key={t} aria-label={t}>{icon}</RailButton>)}
        </Rail>
        <Editor>
          <PathBar>
            <PathName><ModelIcon /><span>MOSCKT</span></PathName>
            <PlainButton aria-label="Path history"><Caret w={10} /></PlainButton>
          </PathBar>
          <Canvas>
            <Wire $x={259} width="198" height="24" viewBox="0 0 198 24">
              <path d="M0 12.500h180" stroke="#000" />
              <path d="M179 2v20l19-10z" />
            </Wire>
            <Wire $x={658} width="150" height="24" viewBox="0 0 150 24">
              <path d="M0 12.500h131" stroke="#000" />
              <path d="M130 2v20l20-10z" />
            </Wire>
            <ShadowNode $x={182} $y={192}>
              <svg width="77" height="76" viewBox="0 0 77 76">
                <path d="M0 0h77v76H0z" />
                <path d="M6 2h20v72H6zM31 2h20v72H31zM54 2h21v72H54z" fill="#fff" />
                <path d="M3.500 2v72M28.500 2v72" stroke="#555" />
              </svg>
            </ShadowNode>
            <ShadowNode $x={457} $y={184}><SpiceBlock /></ShadowNode>
            <Node $x={803} $y={185}>
              <svg width="85" height="90" viewBox="0 0 85 90">
                <path d="M0 0h85v90H0z" fill="#62bcfb" />
                <path d="M5 5h75v80H5z" fill="#fff" stroke="#000" strokeWidth="2" />
                <rect x="15.500" y="16.500" width="55" height="34" rx="5" fill="#fff" stroke="#000" />
              </svg>
              <ScopeName>Scope</ScopeName>
            </Node>
            <ScopePanel />
            <Grip />
          </Canvas>
        </Editor>
      </Workspace>

      <StatusBar>
        <span>Ready</span>
        <ZoomLevel>250%</ZoomLevel>
        <SolverLink href="#solver">auto(FixedStepDiscrete)</SolverLink>
      </StatusBar>

      <Watermark>CSDN @小周冲冲冲go</Watermark>

      <SearchPopup>
        <DotGrip />
        <SearchInput aria-label="Search" defaultValue="S" />
        <svg width="14" height="18" viewBox="0 0 14 18">
          <path d="M1 2l4 2c2-3 5-4 7-2-4 1-3 3-2 5l3-1v11H2l3-3C1 11 0 6 1 2z" fill="#3aa022" stroke="#0c3d06" />
        </svg>
      </SearchPopup>
      <ImeBar>
        <Candidate><CandidateIndex>1</CandidateIndex><span>S</span></Candidate>
        <ImeCell $w={29} aria-label="Previous candidates">
          <svg width="7" height="12" fill="none"><path d="M6.500 0L.500 6l6 6" stroke="#999" /></svg>
        </ImeCell>
        <ImeCell $w={35} aria-label="Next candidates">
          <svg width="7" height="12" fill="none"><path d="M.500 0l6 6-6 6" stroke="#999" /></svg>
        </ImeCell>
        <ImeCell $w={49} $line aria-label="Emoji">
          <svg width="18" height="18" viewBox="0 0 18 18" fill="none" stroke="#222">
            <circle cx="9" cy="9" r="7.500" strokeWidth="1.500" />
            <path d="M5 10.500c1 4 7 4 8 0" strokeWidth="1.500" />
            <circle cx="6.500" cy="6.500" r=".600" fill="#222" />
            <circle cx="11.500" cy="6.500" r=".600" fill="#222" />
          </svg>
        </ImeCell>
      </ImeBar>
    </Shell>
  );
}
